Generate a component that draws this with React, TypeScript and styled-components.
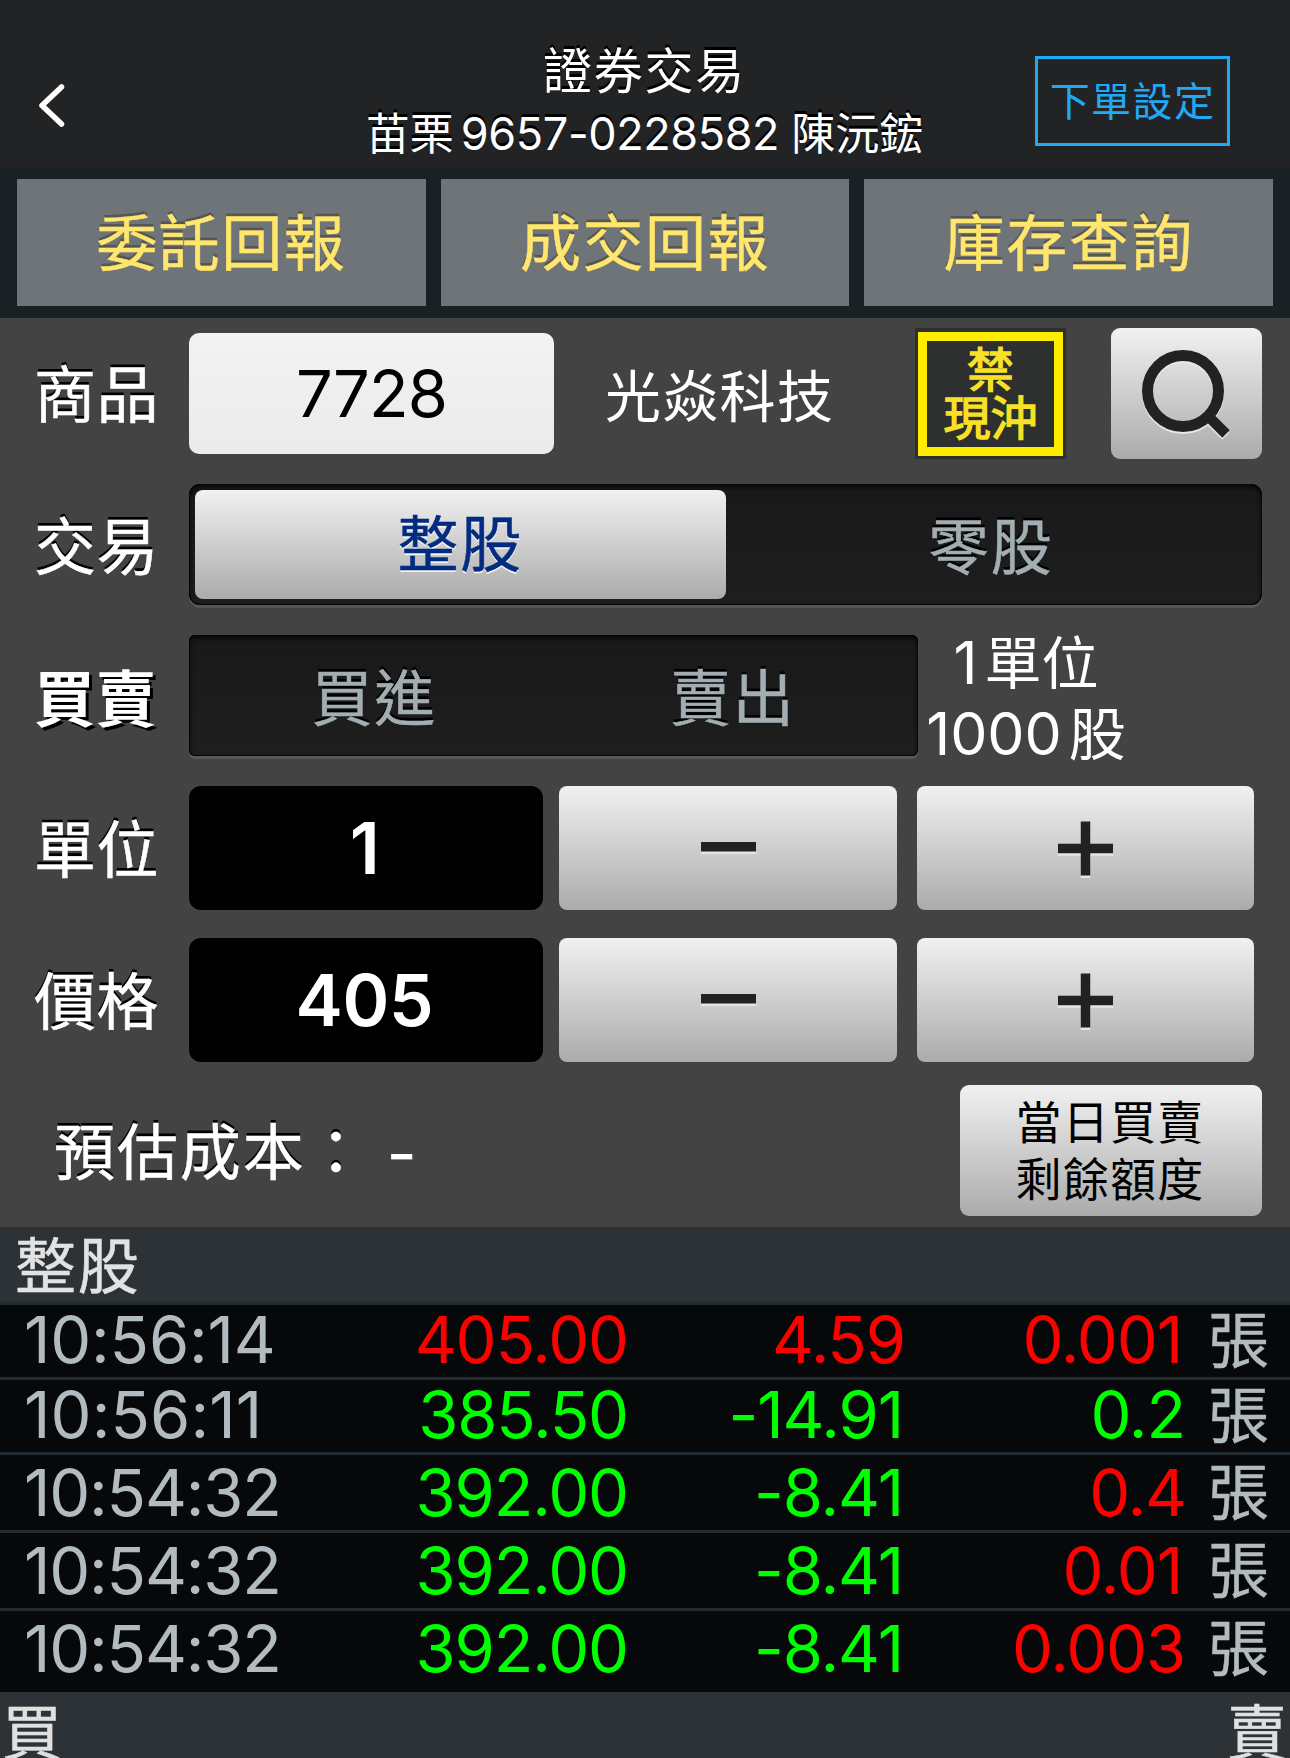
import React from 'react';
import styled, { createGlobalStyle, css } from 'styled-components';

const Global = createGlobalStyle`
  * { box-sizing: border-box; }
  body {
    margin: 0;
    background: #2d3236;
    overflow: hidden;
  }
  button { border: 0; margin: 0; padding: 0; font: inherit; color: inherit; background: none; }
`;

const silver = css`
  background: linear-gradient(#f1f1f1, #ababab);
`;

const sturdy = css`
  -webkit-text-stroke: 0.5px currentColor;
`;

const Screen = styled.main`
  width: 1290px;
  height: 1758px;
  overflow: hidden;
  display: flex;
  flex-direction: column;
  font-family: Inter, 'Noto Sans CJK TC', sans-serif;
  color: #fff;
  white-space: nowrap;
`;

const Header = styled.header`
  height: 168px;
  flex: none;
  display: grid;
  grid-template-columns: 250px 787px 1fr;
  background: #222325;
`;

const BackButton = styled.button`
  display: flex;
  padding: 81px 0 0 35px;
  align-items: flex-start;
`;

const Titles = styled.div`
  display: flex;
  flex-direction: column;
  align-items: center;
  padding: 40px 0 0 2px;
  text-shadow: 0 -3px 0 #000;
`;

const Title = styled.h1`
  margin: 0;
  font-size: 49px;
  font-weight: 400;
  line-height: 64px;
  letter-spacing: 1.8px;
`;

const Account = styled.div`
  display: flex;
  font-size: 44px;
  line-height: 60px;
`;

const AccountNumber = styled.span`
  font-size: 45px;
  letter-spacing: -0.4px;
  margin: 0 12px 0 7px;
`;

const SettingsButton = styled.button`
  width: 195px;
  height: 90px;
  margin: 56px 0 0 -2px;
  border: 3px solid #21a9f6;
  color: #21a9f6;
  font-size: 40px;
  line-height: 86px;
  letter-spacing: 1.4px;
`;

const Tabs = styled.nav`
  height: 150px;
  flex: none;
  display: grid;
  grid-template-columns: repeat(3, 1fr);
  gap: 15px;
  padding: 11px 17px 12px;
  background: #1a2124;
`;

const Tab = styled.button`
  background: #6f7478;
  color: #ffe66c;
  font-size: 61px;
  line-height: 124px;
  padding-top: 3px;
  height: 127px;
  letter-spacing: 1.5px;
  text-shadow: 0 -3px 0 #565656;
  ${sturdy}
`;

const Form = styled.section`
  height: 909px;
  flex: none;
  background: #434343;
`;

const Row = styled.div<{ $h?: number }>`
  height: ${p => p.$h ?? 151}px;
  display: flex;
  align-items: center;
`;

const Label = styled.div<{ $bold?: boolean; $drop?: number }>`
  width: 189px;
  flex: none;
  padding: ${p => p.$drop ?? 0}px 0 0 34px;
  font-size: ${p => (p.$bold ? 61 : 62)}px;
  line-height: 80px;
  letter-spacing: 0.5px;
  font-weight: ${p => (p.$bold ? 700 : 400)};
  text-shadow: ${p => (p.$bold ? '3px 3px 0 #000' : '0 -3px 0 #000')};
  ${p => !p.$bold && sturdy}
`;

const CodeField = styled.div`
  width: 365px;
  height: 121px;
  border-radius: 10px;
  background: linear-gradient(#f4f2f3, #ebebeb);
  color: #000;
  font-size: 65px;
  line-height: 122px;
  letter-spacing: -0.9px;
  text-align: center;
`;

const StockName = styled.div`
  width: 361px;
  padding: 7px 0 0 51px;
  font-size: 56px;
  line-height: 80px;
  letter-spacing: 1.3px;
`;

const BadgeFrame = styled.div`
  width: 151px;
  height: 131px;
  padding: 4px 3px 3px;
  background: #2e2f2f;
`;

const Badge = styled.div`
  height: 124px;
  display: flex;
  flex-direction: column;
  justify-content: center;
  border: 9px solid #ffed00;
  color: #f7e025;
  font-size: 47px;
  line-height: 48px;
  text-align: center;
  -webkit-text-stroke: 1.4px currentColor;
`;

const SearchButton = styled.button`
  width: 151px;
  height: 131px;
  margin-left: 45px;
  border-radius: 9px;
  ${silver}
`;

const Segments = styled.div<{ $w: number; $r: number }>`
  width: ${p => p.$w}px;
  height: 121px;
  padding: 6px;
  display: grid;
  grid-template-columns: 1fr 1fr;
  border-radius: ${p => p.$r}px;
  background: linear-gradient(#191919, #1e1e1e);
  box-shadow: inset 0 0 0 1px #060606, inset 0 3px 5px #050505, 0 3px 0 #575757;
`;

const Segment = styled.button<{ $active?: boolean }>`
  height: 109px;
  font-size: 61px;
  line-height: 106px;
  padding-top: 5px;
  letter-spacing: 1.7px;
  border-radius: 8px;
  color: #a3aeb2;
  text-shadow: 0 -3px 0 #000;
  ${sturdy}
  ${p => p.$active && css`
    ${silver}
    padding-top: 1px;
    color: #032c80;
    text-shadow: 0 2px 0 #f4f4f4;
  `}
`;

const UnitNote = styled.div`
  width: 216px;
  padding-top: 7px;
  text-align: center;
  font-size: 57px;
  line-height: 70px;
`;

const NoteDigits = styled.span`
  font-size: 59px;
  margin-right: 7px;
`;

const ValueBox = styled.div`
  width: 354px;
  height: 124px;
  margin-right: 16px;
  padding-right: 3px;
  border-radius: 12px;
  background: #000;
  font-size: 71px;
  font-weight: 600;
  line-height: 125px;
  letter-spacing: -0.3px;
  text-align: center;
`;

const StepButton = styled.button`
  width: 338px;
  height: 124px;
  margin-right: 20px;
  border-radius: 8px;
  ${silver}
  & + & { width: 337px; }
  svg { display: block; }
`;

const Cost = styled.div`
  flex: 1;
  display: flex;
  padding: 5px 0 0 54px;
  font-size: 61px;
  line-height: 80px;
  letter-spacing: 1.9px;
  text-shadow: 0 -3px 0 #000;
  ${sturdy}
`;

const CostValue = styled.span`
  margin-left: 18px;
  font-size: 66px;
  text-shadow: none;
  -webkit-text-stroke: 0;
`;

const QuotaButton = styled.button`
  width: 302px;
  height: 131px;
  margin-right: 28px;
  padding: 0 2px 0 0;
  border-radius: 9px;
  color: #000;
  font-size: 46px;
  line-height: 57px;
  letter-spacing: 1.2px;
  ${silver}
`;

const SectionBar = styled.div`
  height: 78px;
  flex: none;
  padding-left: 15px;
  border-bottom: 3px solid #222d30;
  background: #2d3236;
  color: #e3e2e2;
  font-size: 61px;
  line-height: 80px;
  letter-spacing: 1.7px;
  ${sturdy}
`;

const Tick = styled.div<{ $h: number; $line: number; $last?: boolean }>`
  height: ${p => p.$h}px;
  flex: none;
  display: grid;
  grid-template-columns: 390px 242px 275px 279px 1fr;
  border-bottom: ${p => (p.$last ? 0 : 3)}px solid #232b32;
  background: #07080a;
  font-size: 65px;
  line-height: ${p => p.$line}px;
  color: #b2bbbf;
`;

const Time = styled.span<{ $track: number }>`
  padding-left: 24px;
  letter-spacing: ${p => p.$track}px;
`;

const Figure = styled.span<{ $up: boolean; $inset?: number }>`
  text-align: right;
  padding-right: ${p => p.$inset ?? 4}px;
  letter-spacing: -1.1px;
  color: ${p => (p.$up ? '#ff0000' : '#00ff00')};
`;

const Unit = styled.span`
  padding: 1px 0 0 22px;
  font-size: 61px;
  ${sturdy}
`;

const DepthBar = styled.footer`
  flex: 1;
  display: flex;
  justify-content: space-between;
  padding: 0 3px 0 2px;
  background: #2d3236;
  color: #e1e0e0;
  font-size: 60px;
  line-height: 83px;
  ${sturdy}
`;

const Minus = () => (
  <StepButton aria-label="minus">
    <svg width="338" height="124">
      <rect x="142" y="60" width="55" height="8" fill="#e4e4e4" />
      <rect x="142" y="56" width="55" height="9.5" fill="#222" />
    </svg>
  </StepButton>
);

const Plus = () => (
  <StepButton aria-label="plus">
    <svg width="337" height="124">
      <path d="M141 65h55M168.500 38v54" stroke="#e6e6e6" strokeWidth="9.500" />
      <path d="M141 62.500h55M168.500 35.500v54" stroke="#222" strokeWidth="9.500" />
    </svg>
  </StepButton>
);

const ticks = [
  { time: '10:56:14', track: -0.2, price: '405.00', change: '4.59', changeInset: 2, volume: '0.001', volInset: 4, up: true, volUp: true, h: 75, line: 70 },
  { time: '10:56:11', track: 0.1, price: '385.50', change: '-14.91', changeInset: 4, volume: '0.2', volInset: 1, up: false, volUp: false, h: 75, line: 70 },
  { time: '10:54:32', track: -1.2, price: '392.00', change: '-8.41', changeInset: 4, volume: '0.4', volInset: 0, up: false, volUp: true, h: 78, line: 75 },
  { time: '10:54:32', track: -1.2, price: '392.00', change: '-8.41', changeInset: 4, volume: '0.01', volInset: 4, up: false, volUp: true, h: 78, line: 75 },
  { time: '10:54:32', track: -1.2, price: '392.00', change: '-8.41', changeInset: 4, volume: '0.003', volInset: 1, up: false, volUp: true, h: 81, line: 75 },
];

export default function App() {
  return (
    <>
      <Global />
      <Screen>
        <Header>
          <BackButton aria-label="back">
            <svg width="34" height="50" fill="none" stroke="#fff" strokeWidth="5.5" strokeLinecap="round" strokeLinejoin="round">
              <path d="M26.5 6L7 24.500L26.500 43" />
            </svg>
          </BackButton>
          <Titles>
            <Title>證券交易</Title>
            <Account>
              <span>苗栗</span>
              <AccountNumber>9657-0228582</AccountNumber>
              <span>陳沅鋐</span>
            </Account>
          </Titles>
          <SettingsButton>下單設定</SettingsButton>
        </Header>
        <Tabs>
          <Tab>委託回報</Tab>
          <Tab>成交回報</Tab>
          <Tab>庫存查詢</Tab>
        </Tabs>
        <Form>
          <Row>
            <Label $drop={5}>商品</Label>
            <CodeField>7728</CodeField>
            <StockName>光焱科技</StockName>
            <BadgeFrame>
              <Badge>
                <span>禁</span>
                <span>現沖</span>
              </Badge>
            </BadgeFrame>
            <SearchButton aria-label="search">
              <svg width="151" height="131" fill="none">
                <g stroke="#e8e8e8" transform="translate(0 2)">
                  <circle cx="72" cy="63" r="35.500" strokeWidth="11" />
                  <path d="M98 89L115 106" strokeWidth="10.500" />
                </g>
                <g stroke="#222">
                  <circle cx="72" cy="63" r="35.500" strokeWidth="11" />
                  <path d="M96 87L115 106" strokeWidth="10.500" />
                </g>
              </svg>
            </SearchButton>
          </Row>
          <Row>
            <Label $drop={7}>交易</Label>
            <Segments $w={1073} $r={11}>
              <Segment $active>整股</Segment>
              <Segment>零股</Segment>
            </Segments>
          </Row>
          <Row>
            <Label $bold $drop={9}>買賣</Label>
            <Segments $w={729} $r={6}>
              <Segment>買進</Segment>
              <Segment>賣出</Segment>
            </Segments>
            <UnitNote>
              <NoteDigits>1</NoteDigits>單位
              <br />
              <NoteDigits>1000</NoteDigits>股
            </UnitNote>
          </Row>
          <Row $h={154}>
            <Label $drop={5}>單位</Label>
            <ValueBox>1</ValueBox>
            <Minus />
            <Plus />
          </Row>
          <Row $h={150}>
            <Label $drop={5}>價格</Label>
            <ValueBox>405</ValueBox>
            <Minus />
            <Plus />
          </Row>
          <Row>
            <Cost>
              預估成本：<CostValue>-</CostValue>
            </Cost>
            <QuotaButton>
              當日買賣
              <br />
              剩餘額度
            </QuotaButton>
          </Row>
        </Form>
        <SectionBar>整股</SectionBar>
        {ticks.map((t, i) => (
          <Tick key={i} $h={t.h} $line={t.line} $last={i === ticks.length - 1}>
            <Time $track={t.track}>{t.time}</Time>
            <Figure $up={t.up}>{t.price}</Figure>
            <Figure $up={t.up} $inset={t.changeInset}>{t.change}</Figure>
            <Figure $up={t.volUp} $inset={t.volInset}>{t.volume}</Figure>
            <Unit>張</Unit>
          </Tick>
        ))}
        <DepthBar>
          <span>買</span>
          <span>賣</span>
        </DepthBar>
      </Screen>
    </>
  );
}
